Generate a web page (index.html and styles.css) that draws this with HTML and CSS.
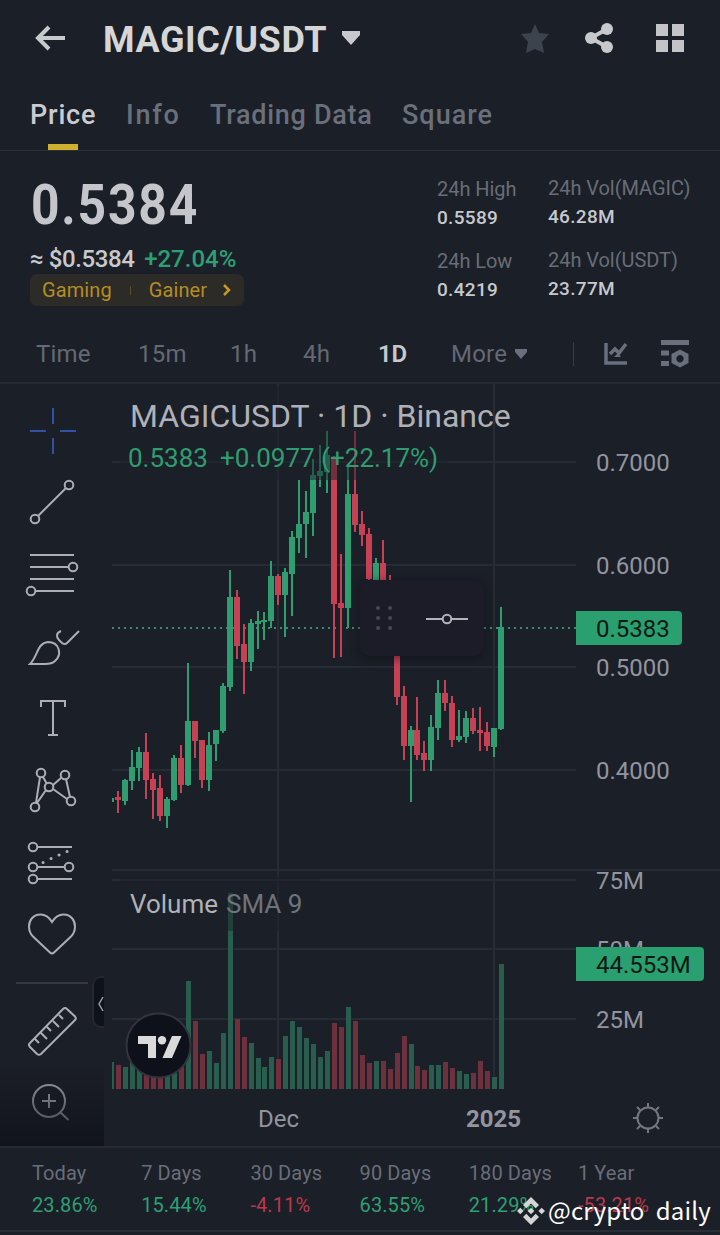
FILE: index.html
```html
<!DOCTYPE html>
<html lang="en">
<head>
  <meta charset="UTF-8">
  <meta name="viewport" content="width=device-width, initial-scale=1.0">
  <title>MAGIC/USDT</title>
  <link rel="stylesheet" href="styles.css">
</head>
<body>
  <header class="header">
    <svg class="back" width="32" height="26" viewBox="0 0 32 26"><path d="M15 2 4 13l11 11M4 13h27"/></svg>
    <h1 class="pair">MAGIC/USDT</h1>
    <svg class="caret" width="20" height="15" viewBox="0 0 20 15"><path d="M1 0h18v4l-9 10-9-10z"/></svg>
    <div class="actions">
      <svg class="star" width="32" height="32" viewBox="0 0 32 32"><path d="m16 2 4 9 10 1-7 8 2 11-9-4-9 4 2-11-7-8 10-1z"/></svg>
      <svg class="share" width="30" height="32" viewBox="0 0 30 32"><path d="M23 7 7 16l16 9"/><circle cx="7" cy="16" r="6"/><circle cx="23" cy="7" r="6"/><circle cx="23" cy="25" r="6"/></svg>
      <svg class="apps" width="28" height="28" viewBox="0 0 28 28"><path d="M0 0h12v12H0zM16 0h12v12H16zM0 16h12v12H0zM16 16h12v12H16z"/></svg>
    </div>
  </header>

  <nav class="tabs">
    <a class="tab active">Price</a>
    <a class="tab info">Info</a>
    <a class="tab trading">Trading Data</a>
    <a class="tab square">Square</a>
  </nav>

  <section class="summary">
    <div class="price">
      <div class="last">0.5384</div>
      <div class="fiat">≈ $0.5384 <span class="up">+27.04%</span></div>
      <div class="tags">
        <span>Gaming</span>
        <i></i>
        <span>Gainer</span>
        <svg width="8" height="12" viewBox="0 0 8 12"><path d="m1 1 5 5-5 5"/></svg>
      </div>
    </div>
    <dl class="stats low-high">
      <dt>24h High</dt>
      <dd>0.5589</dd>
      <dt>24h Low</dt>
      <dd>0.4219</dd>
    </dl>
    <dl class="stats volumes">
      <dt>24h Vol(MAGIC)</dt>
      <dd>46.28M</dd>
      <dt>24h Vol(USDT)</dt>
      <dd>23.77M</dd>
    </dl>
  </section>

  <div class="intervals">
    <span>Time</span>
    <span>15m</span>
    <span>1h</span>
    <span>4h</span>
    <span class="selected">1D</span>
    <span class="more">More <svg width="12" height="10" viewBox="0 0 12 10"><path d="M0 0h12v3L6 10 0 3z"/></svg></span>
    <i></i>
    <svg class="indicator" width="24" height="24" viewBox="0 0 24 24"><path class="line" d="M2 1v20h21M6 12l5-5 4 4 7-9"/><path d="m10 15 4-4 3 4z"/></svg>
    <svg class="settings" width="28" height="28" viewBox="0 0 28 28"><path d="M0 0h28v5H0zM0 10.500h8v5H0zM0 21h8v5H0z"/><path fill-rule="evenodd" d="M19 9.500 27.500 14v9L19 27.500 10.500 23v-9zM19 15a3.700 3.700 0 1 0 .01 0z"/></svg>
  </div>

  <main class="main">
    <aside class="toolbar">
      <svg class="cross" viewBox="0 0 56 56"><path d="M29 6v16M29 36v16M6 29h16M36 29h16"/></svg>
      <svg viewBox="0 0 56 56"><path d="m14 42 28-28"/><circle cx="45" cy="11" r="4.300"/><circle cx="11" cy="45" r="4.300"/></svg>
      <svg viewBox="0 0 56 56"><path d="M6 9h44M6 21h39M6 33h44M11 45h39"/><circle cx="49" cy="21" r="4.300"/><circle cx="7" cy="45" r="4.300"/></svg>
      <svg viewBox="0 0 56 56"><path d="M6 46C14 38 13 25 24 24c12 0 14 13 7 19-3 3-7 3-10 3zM37 13c-5 2-5 6-2 9l3 3q3 2 5 0l12-12"/></svg>
      <svg viewBox="0 0 56 56"><path d="M17 17v-6h24v6M29 11v34M24 45h10"/></svg>
      <svg viewBox="0 0 56 56"><path d="m16 15-4 26M19 15l4 7M29 23l8-7M42 17l4 18M29 27l14 10M22 28 13 41"/><circle cx="17" cy="11" r="4.300"/><circle cx="41" cy="13" r="4.300"/><circle cx="25" cy="25" r="4.300"/><circle cx="47" cy="39" r="4.300"/><circle cx="11" cy="45" r="4.300"/></svg>
      <svg viewBox="0 0 56 56"><path d="M13 13h35M13 33h28M13 45h35"/><path class="dots" d="m19 28.500.1 0M27 24.500l.1 0M35 21l.1 0M43 17.500l.1 0"/><circle cx="9" cy="13" r="4.300"/><circle cx="9" cy="33" r="4.300"/><circle cx="45" cy="33" r="4.300"/><circle cx="9" cy="45" r="4.300"/></svg>
      <svg viewBox="0 0 56 56"><path d="M28 16C25 11 21 8.500 16.500 8.500 9 8.500 5 14.500 5 20.500c0 5 2 8 4 10l17 16q2 2 4 0l17-16c2-2 4-5 4-10 0-6-4-12-11.500-12C35 8.500 31 11 28 16z"/></svg>
      <hr>
      <svg viewBox="0 0 56 56"><path d="m39 6q2-2 4 0l8 7.500q1.500 2 0 3.500L17 51q-2 1.500-4 0l-7-7q-2-2 0-4zM11 36l4 4M17 30l6 6M23 24l4 4M29 18l6 6M35 12l4 4"/></svg>
      <svg viewBox="0 0 56 56"><circle cx="25" cy="26" r="16"/><path d="M25 19v14M18 26h14M36.500 37.500l8 7.500"/></svg>
      <div class="fade"></div>
      <div class="collapse"><svg width="6" height="16" viewBox="0 0 6 16"><path d="M5 1 1 8l4 7"/></svg></div>
    </aside>

    <div class="chart">
      <svg class="plot" width="616" height="762" viewBox="104 384 616 762">
        <path class="grid" d="M112 462h464M112 565h464M112 667h464M112 770h464M112 870h608M112 880h464M112 949h464M112 1019h464M278 384v705M494 384v705"/>
        <g id="volume"></g>
        <path class="last-price" d="M112 628h464"/>
        <g id="candles"></g>
        <path class="shade" d="M120 386h328v94H120zM120 875h200v56H120z"/>

        <text class="title" x="130" y="427">MAGICUSDT · 1D · Binance</text>
        <text class="quote" x="128" y="467">0.5383</text>
        <text class="quote" x="220" y="467">+0.0977 (+22.17%)</text>
        <text class="study" x="130" y="913">Volume</text>
        <text class="study dim" x="226" y="913">SMA 9</text>

        <g class="axis">
          <text x="596" y="471">0.7000</text>
          <text x="596" y="574">0.6000</text>
          <text x="596" y="676">0.5000</text>
          <text x="596" y="779">0.4000</text>
          <text x="596" y="889">75M</text>
          <text x="596" y="958">50M</text>
          <text x="596" y="1028">25M</text>
          <text x="258" y="1127">Dec</text>
          <text class="year" x="466" y="1127">2025</text>
        </g>
        <path class="tag" d="M576 611h102q4 0 4 4v26q0 4-4 4H576zM576 947h124q4 0 4 4v26q0 4-4 4H576z"/>
        <text class="tag-text" x="596" y="637">0.5383</text>
        <text class="tag-text" x="596" y="973">44.553M</text>

        <g class="tv">
          <circle cx="158.500" cy="1045.500" r="32"/>
          <path d="M138 1036h18v22h-8v-14h-10zM172 1036h9.500l-9.500 22h-9.500z"/>
          <circle class="dot" cx="162" cy="1040.300" r="4.200"/>
        </g>
        <g class="gear">
          <circle cx="648" cy="1118" r="10.500"/>
          <path d="M648 1107v-4M648 1129v4M637 1118h-4M659 1118h4M640 1110l-3-3M656 1126l3 3M640 1126l-3 3M656 1110l3-3"/>
        </g>
      </svg>
      <div class="popup">
        <svg class="handle" width="18" height="26" viewBox="0 0 18 26"><path d="M3 3h.1M15 3h.1M3 13h.1M15 13h.1M3 23h.1M15 23h.1"/></svg>
        <svg class="hline" width="42" height="12" viewBox="0 0 42 12"><path d="M0 6h16M26 6h16"/><circle cx="21" cy="6" r="4.300"/></svg>
      </div>
    </div>
  </main>

  <footer class="performance">
    <div><span>Today</span><b class="up">23.86%</b></div>
    <div><span>7 Days</span><b class="up">15.44%</b></div>
    <div><span>30 Days</span><b class="down">-4.11%</b></div>
    <div><span>90 Days</span><b class="up">63.55%</b></div>
    <div><span>180 Days</span><b class="up">21.29%</b></div>
    <div><span>1 Year</span><b class="down">-53.21%</b></div>
  </footer>

  <div class="credit">
    <svg width="28" height="28" viewBox="0 0 28 28"><path d="m14 0 8 8-3.300 3.300L14 6.600l-4.700 4.700L6 8zM14 28l8-8-3.300-3.300-4.700 4.700-4.700-4.700L6 20zM3.300 10.700 6.600 14l-3.300 3.300L0 14zM24.700 10.700 28 14l-3.300 3.300-3.300-3.300zM14 10.700l3.300 3.300-3.300 3.300-3.300-3.300z"/></svg>
    <span>@crypto&nbsp; daily</span>
  </div>

  <script src="chart.js"></script>
</body>
</html>
```
FILE: styles.css
```css
* {
  box-sizing: border-box;
}
body {
  margin: 0;
  width: 720px;
  height: 1235px;
  position: relative;
  overflow: hidden;
  background: #1b1f27;
  color: #c7c9cd;
  font-family: Roboto, "Liberation Sans", sans-serif;
}
svg {
  display: block;
  flex: none;
}
.up {
  color: #2e9f73;
}
.down {
  color: #b9394d;
}

/* header */
.header {
  display: flex;
  align-items: center;
  height: 78px;
  padding: 0 36px 2px 34px;
}
.back {
  fill: none;
  stroke: #c7c9cd;
  stroke-width: 4;
}
.pair {
  margin: 4px 0 0 37px;
  width: 223px;
  font-size: 36px;
  line-height: 44px;
  font-weight: 700;
  letter-spacing: .6px;
  color: #d6d6d7;
}
.caret {
  margin-left: 15px;
  fill: #c7c9cd;
}
.actions {
  display: flex;
  align-items: center;
  margin-left: auto;
}
.star {
  fill: #3d434d;
  margin-right: 33px;
}
.share {
  fill: #c7c9cd;
  stroke: none;
  margin-right: 42px;
}
.share path {
  fill: none;
  stroke: #c7c9cd;
  stroke-width: 4;
}
.apps {
  fill: #c3c4c8;
}

/* tabs */
.tabs {
  display: flex;
  height: 73px;
  padding: 17px 0 0 30px;
  border-bottom: 1px solid #2d3139;
  font-size: 27px;
  line-height: 40px;
  font-weight: 500;
  color: #6a707b;
}
.tab {
  width: 65px;
  margin-right: 31px;
  white-space: nowrap;
}
.tab.active {
  color: #cbccd0;
  letter-spacing: .8px;
}
.tab.active::after {
  content: "";
  display: block;
  width: 30px;
  height: 6px;
  margin: 9px 0 0 18px;
  background: #cfb12f;
}
.tab.info {
  width: 54px;
  margin-right: 30px;
  letter-spacing: 1.8px;
}
.tab.trading {
  width: 162px;
  margin-right: 30px;
  letter-spacing: .7px;
}
.tab.square {
  width: 92px;
  letter-spacing: 1px;
}

/* price summary */
.summary {
  display: flex;
  height: 173px;
  padding-left: 30px;
}
.price {
  width: 407px;
  padding-top: 22px;
}
.last {
  height: 64px;
  margin-left: 1px;
  font-size: 56px;
  line-height: 65px;
  font-weight: 700;
  letter-spacing: 2px;
  color: #c5c6cb;
  transform: scaleX(.89);
  transform-origin: left;
}
.fiat {
  height: 30px;
  margin-top: 7px;
  font-size: 24px;
  line-height: 30px;
  font-weight: 500;
  letter-spacing: -.4px;
  white-space: nowrap;
}
.fiat .up {
  margin-left: 4px;
  letter-spacing: 0;
}
.tags {
  display: flex;
  align-items: center;
  width: 214px;
  height: 32px;
  padding-left: 12px;
  border-radius: 7px;
  background: #2d2b27;
  color: #b48d26;
  font-size: 20px;
  letter-spacing: .1px;
}
.tags i {
  width: 1px;
  height: 9px;
  margin: 0 18px;
  background: #5d4b25;
}
.tags svg {
  margin-left: 16px;
  fill: none;
  stroke: #c69b25;
  stroke-width: 2.5;
}
.stats {
  width: 111px;
  margin: 0;
  padding-top: 26px;
  font-size: 19px;
  line-height: 24px;
  letter-spacing: .3px;
  white-space: nowrap;
}
.stats dt {
  color: #686d77;
  font-size: 20px;
  letter-spacing: -.05px;
}
.stats dd {
  margin: 4px 0 20px;
  font-weight: 500;
  position: relative;
  top: 1px;
}
.volumes {
  padding-top: 25px;
}

/* interval selector */
.intervals {
  display: grid;
  grid-template-columns: 102px 92px 73px 75px 73px 122px 31px 57px 28px;
  align-items: center;
  height: 60px;
  padding: 1px 0 0 36px;
  border-bottom: 2px solid #252930;
  font-size: 24px;
  letter-spacing: .2px;
  color: #636975;
}
.intervals .selected {
  color: #c7c9cd;
  font-weight: 600;
  letter-spacing: -.3px;
}
.more {
  display: flex;
  align-items: center;
  gap: 8px;
}
.intervals svg {
  fill: #696f7d;
}
.intervals i {
  width: 1px;
  height: 24px;
  background: #383c45;
}
.indicator .line {
  fill: none;
  stroke: #696f7d;
  stroke-width: 3.5;
}

/* drawing toolbar */
.main {
  display: flex;
  height: 762px;
}
.toolbar {
  position: relative;
  width: 104px;
  padding: 10px 0 0 24px;
}
.toolbar > svg {
  width: 56px;
  height: 56px;
  margin: 8px 0 16px;
  fill: none;
  stroke: #abaeb6;
  stroke-width: 2;
}
.toolbar .cross {
  stroke: #3152a4;
}
.toolbar .dots {
  stroke-width: 3;
  stroke-linecap: round;
}
.toolbar hr {
  width: 72px;
  height: 2px;
  margin: 20px 0 19px -8px;
  border: 0;
  background: #343841;
}
.fade {
  position: absolute;
  left: 0;
  right: 0;
  bottom: 0;
  height: 86px;
  background: linear-gradient(rgba(15, 17, 27, 0), rgba(15, 17, 27, .8));
}
.collapse {
  position: absolute;
  top: 592px;
  right: 0;
  width: 12px;
  height: 52px;
  padding: 18px 0 0 6px;
  border: 2px solid #242730;
  border-right: 0;
  border-radius: 9px 0 0 9px;
  background: #10121b;
}
.collapse svg {
  margin-left: -2px;
  fill: none;
  stroke: #9b9ea6;
  stroke-width: 1.5;
}

/* chart */
.chart {
  position: relative;
  width: 616px;
}
.grid {
  fill: none;
  stroke: #272b33;
  stroke-width: 2;
}
.last-price {
  stroke: #388c72;
  stroke-width: 2;
  stroke-dasharray: 2 4;
}
.candle-up {
  fill: #2f9d70;
}
.candle-down {
  fill: #c74154;
}
.volume-up {
  fill: #295e4e;
}
.volume-down {
  fill: #6f303e;
}
.shade {
  fill: #1b1f27;
  opacity: .5;
}
.title {
  font-size: 32px;
  fill: #afb1b8;
}
.quote {
  font-size: 26px;
  fill: #2f9d70;
}
.study {
  font-size: 26px;
  fill: #afb1b8;
}
.study.dim {
  fill: #6f737b;
}
.axis {
  font-size: 24px;
  fill: #9295a0;
}
.axis .year {
  font-weight: 700;
}
.tag {
  fill: #2a9f70;
}
.tag-text {
  font-size: 24px;
  fill: #0e1914;
}
.tv circle {
  fill: #0e1119;
  stroke: #32353e;
  stroke-width: 2;
}
.tv path,
.tv .dot {
  fill: #dadadb;
  stroke: none;
}
.gear {
  fill: none;
  stroke: #747780;
  stroke-width: 2;
}
.popup {
  position: absolute;
  left: 256px;
  top: 196px;
  display: flex;
  align-items: center;
  width: 124px;
  height: 76px;
  padding: 0 16px 0 15px;
  border-radius: 10px;
  background: #1b1c27;
  box-shadow: 0 2px 10px rgba(10, 12, 20, .55);
}
.handle {
  fill: none;
  stroke: #464851;
  stroke-width: 4;
  stroke-linecap: round;
}
.hline {
  margin: 2px 0 0 auto;
  fill: none;
  stroke: #b2b4bb;
  stroke-width: 2;
}

/* performance */
.performance {
  display: grid;
  grid-template-columns: repeat(6, 109.200px);
  height: 86px;
  padding: 13px 0 0 32px;
  border-top: 2px solid #262a31;
  border-bottom: 2px solid #292d34;
  font-size: 20px;
  line-height: 24px;
  color: #686e79;
}
.performance span,
.performance b {
  display: block;
  white-space: nowrap;
  letter-spacing: .1px;
}
.performance b {
  margin-top: 8px;
  font-weight: 400;
}
.credit {
  position: absolute;
  left: 517px;
  top: 1196px;
  display: flex;
  align-items: center;
  gap: 3px;
  height: 30px;
  color: #fff;
  font: 400 24px/26px "Noto Sans CJK SC", sans-serif;
  letter-spacing: .2px;
  white-space: nowrap;
}
.credit span {
  margin-top: -3px;
}
.credit svg {
  fill: #d5d5d6;
}
```
FILE: chart.js
```js
// [x, direction, high, body top, body bottom, low, volume top]
const bars = [
  [118, -1, 791, 797, 800, 813, 1065],
  [125, 1, 779, 780, 801, 805, 1067],
  [132, 1, 750, 767, 781, 790, 1061],
  [139, 1, 747, 752, 768, 781, 1060],
  [146, -1, 733, 752, 780, 799, 1060],
  [153, -1, 773, 779, 790, 819, 1062],
  [160, -1, 775, 788, 816, 821, 1062],
  [167, 1, 797, 799, 816, 828, 1062],
  [174, 1, 755, 758, 800, 801, 1060],
  [181, -1, 745, 758, 785, 793, 1064],
  [188, 1, 663, 721, 785, 786, 981],
  [195, -1, 721, 721, 741, 758, 1021],
  [202, -1, 740, 740, 780, 788, 1054],
  [209, 1, 732, 745, 780, 791, 1051],
  [216, 1, 730, 730, 744, 761, 1063],
  [223, 1, 683, 686, 731, 733, 1033],
  [230, 1, 570, 597, 687, 691, 893],
  [237, -1, 590, 597, 646, 659, 1019],
  [244, -1, 624, 644, 662, 694, 1037],
  [251, 1, 619, 623, 662, 671, 1043],
  [258, 1, 611, 621, 624, 649, 1058],
  [264, 1, 612, 620, 622, 640, 1067],
  [271, 1, 561, 576, 621, 628, 1057],
  [278, -1, 574, 576, 595, 605, 1059],
  [285, 1, 568, 572, 595, 637, 1036],
  [292, 1, 531, 537, 574, 616, 1021],
  [299, 1, 480, 524, 538, 553, 1027],
  [306, 1, 491, 512, 524, 558, 1038],
  [313, 1, 459, 475, 513, 536, 1044],
  [320, 1, 445, 471, 476, 487, 1057],
  [327, 1, 431, 455, 472, 493, 1051],
  [334, -1, 456, 457, 604, 658, 1023],
  [341, -1, 554, 603, 608, 657, 1027],
  [348, 1, 467, 494, 608, 628, 1007],
  [355, -1, 431, 494, 525, 532, 1021],
  [362, -1, 511, 524, 535, 546, 1055],
  [369, -1, 528, 534, 579, 580, 1063],
  [376, 1, 558, 563, 580, 584, 1061],
  [383, -1, 540, 563, 582, 590, 1061],
  [390, -1, 575, 582, 620, 640, 1069],
  [397, -1, 600, 620, 697, 705, 1053],
  [404, -1, 686, 696, 746, 760, 1036],
  [411, 1, 726, 730, 746, 802, 1044],
  [417, -1, 697, 730, 755, 760, 1066],
  [424, -1, 741, 753, 760, 771, 1070],
  [431, 1, 715, 727, 760, 771, 1065],
  [438, 1, 680, 693, 728, 740, 1065],
  [445, -1, 680, 693, 703, 711, 1062],
  [452, -1, 696, 703, 740, 747, 1068],
  [459, 1, 710, 736, 740, 742, 1071],
  [466, 1, 711, 718, 737, 743, 1074],
  [473, -1, 708, 718, 731, 734, 1073],
  [480, -1, 707, 730, 733, 751, 1061],
  [487, -1, 722, 732, 746, 751, 1071],
  [494, 1, 728, 728, 747, 757, 1077],
  [501, 1, 607, 627, 729, 730, 964]
];
const volumeBase = 1089;

function addRect(parent, x, y, width, height, className) {
  const rect = document.createElementNS('http://www.w3.org/2000/svg', 'rect');
  rect.setAttribute('x', x);
  rect.setAttribute('y', y);
  rect.setAttribute('width', width);
  rect.setAttribute('height', height);
  rect.setAttribute('class', className);
  parent.appendChild(rect);
}

const candles = document.getElementById('candles');
const volume = document.getElementById('volume');

// the oldest bar is cut off by the left edge of the plot
addRect(candles, 112, 798, 2, 4, 'candle-up');
addRect(volume, 112, 1062, 2, volumeBase - 1062, 'volume-up');

bars.forEach(([x, dir, high, top, bottom, low, vol]) => {
  const side = dir > 0 ? 'up' : 'down';
  addRect(candles, x - 1, high, 2, low - high, 'candle-' + side);
  addRect(candles, x - 3, top, 6, bottom - top, 'candle-' + side);
  addRect(volume, x - 2, vol, 5, volumeBase - vol, 'volume-' + side);
});
```
